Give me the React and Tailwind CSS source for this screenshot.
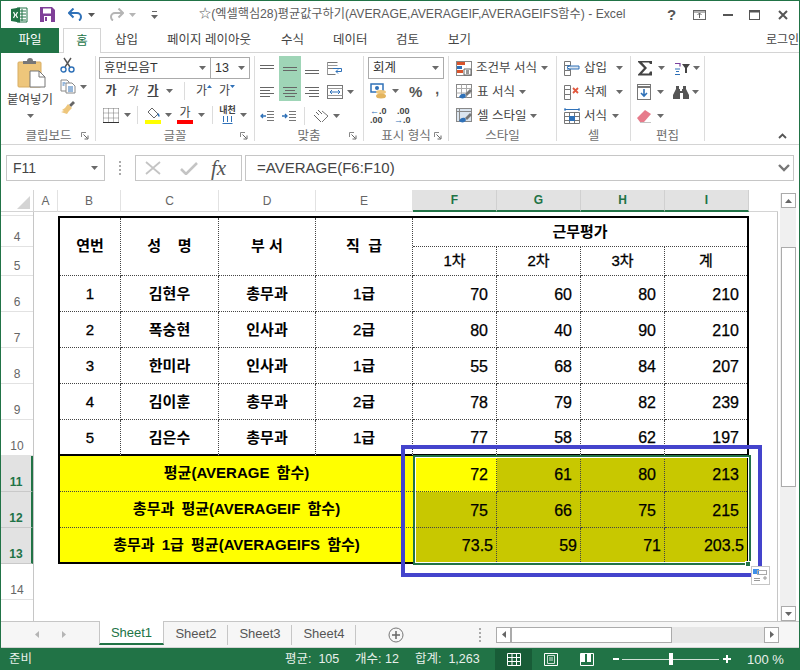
import React from "react";

const Caret = ({ c = "#6a6a6a", cls = "" }) => (
  <svg width="7" height="4" viewBox="0 0 7 4" className={"shrink-0 " + cls}><path d="M0 0h7L3.500 4z" fill={c} /></svg>
);

const Launcher = () => (
  <svg width="8" height="8" viewBox="0 0 8 8"><path d="M.5 5V.5H5" fill="none" stroke="#888" /><path d="M2.500 2.500l4 4M7 3.500V7H3.500" fill="none" stroke="#666" /></svg>
);

const Group = ({ w, label, children, launcher = true, last }) => (
  <div className={`${w} h-[85px] mt-[3px] flex flex-col shrink-0 ${last ? "" : "border-r border-[#dcdcdc]"}`}>
    <div className="flex-1 min-h-0 flex flex-col">{children}</div>
    <div className="h-[17px] grid grid-cols-[14px_1fr_14px] items-center text-[12.500px] leading-none text-[#707070] pt-[6px]">
      <span />
      <span className="text-center whitespace-nowrap">{label}</span>
      <span className="flex items-center">{launcher && <Launcher />}</span>
    </div>
  </div>
);

const Lines = ({ rows }) => (
  <svg width="14" height="12" viewBox="0 0 14 12">
    {rows.map((r, i) => <path key={i} d={`M${r[0]} ${r[1]}.5H${r[2]}`} stroke="#666" fill="none" />)}
  </svg>
);

const Paste = () => (
  <svg width="30" height="30" viewBox="0 0 30 30">
    <rect x="1" y="4" width="23" height="25" rx="1" fill="#eec67b" stroke="#d8ad62" />
    <path d="M6 6V3h4a3 3 0 0 1 6 0h3v3z" fill="#777" />
    <path d="M13 13h9l6 6v10H13z" fill="#fff" stroke="#777" />
    <path d="M22 13v6h6" fill="none" stroke="#777" />
  </svg>
);
const Cut = () => (
  <svg width="15" height="16" viewBox="0 0 15 16" fill="none">
    <path d="M4 1l6 9M11 1L5 10" stroke="#555" strokeWidth="1.400" />
    <circle cx="3.500" cy="12.500" r="2.500" stroke="#2f71b8" strokeWidth="1.400" />
    <circle cx="11.500" cy="12.500" r="2.500" stroke="#2f71b8" strokeWidth="1.400" />
  </svg>
);
const Copy = () => (
  <svg width="16" height="15" viewBox="0 0 16 15" fill="none">
    <path d="M1 1h6l2 2v9H1z" fill="#fff" stroke="#888" />
    <path d="M6 4h6l3 3v7H6z" fill="#fff" stroke="#888" />
    <path d="M2.500 4h3M2.500 6h2M8 8h5M8 10h5M8 12h5" stroke="#2f71b8" />
  </svg>
);
const Brush = () => (
  <svg width="16" height="15" viewBox="0 0 16 15">
    <path d="M9 5l4-4 2 2-4 4z" fill="#666" />
    <path d="M8 4l4 4-3 3-2 3-6-2 3-1-2-1 3-2z" fill="#eec67b" />
  </svg>
);
const Borders = () => (
  <svg width="16" height="15" viewBox="0 0 16 15" fill="none">
    <path d="M.5.5h15M.5 5h15M.5 10h15M.5.5v14M5.500.5v14M10.500.5v14M15.500.5v14" stroke="#777" strokeDasharray="1 1" />
    <path d="M0 14.500h16" stroke="#333" />
  </svg>
);
const Fill = () => (
  <svg width="16" height="17" viewBox="0 0 16 17">
    <path d="M7 1l6 6-4 4-6-6z" fill="#fff" stroke="#666" />
    <path d="M13 6c2 2 2 3 1 4-1-1-2-2-1-4z" fill="#2f71b8" />
    <rect y="13" width="16" height="4" fill="#ffff00" />
  </svg>
);
const FontColor = () => (
  <span className="flex flex-col items-center w-[16px] leading-none">
    <span className="text-[12px] h-[13px] text-[#444]">가</span>
    <span className="w-[16px] h-[4px] bg-[#ff0000]" />
  </span>
);
const Naecheon = () => (
  <span className="flex flex-col items-center leading-none w-[17px]">
    <span className="text-[9px] h-[10px] text-[#444] whitespace-nowrap font-bold">내천</span>
    <svg width="11" height="8" viewBox="0 0 11 8"><path d="M1.500 0v6M5.500 0v6M9.500 0v6M.5 7.500h10" stroke="#2f71b8" fill="none" /></svg>
  </span>
);
const Wrap = () => (
  <svg width="16" height="15" viewBox="0 0 16 15" fill="none">
    <path d="M.5 1.500h10M.5 7.500h8M.5 13.500h8" stroke="#777" />
    <path d="M.5 1v13M.5 4.500h10" stroke="#999" />
    <path d="M6 7.500h8.500v3H9M11 8.500l-2 2 2 2" stroke="#2f71b8" />
  </svg>
);
const Merge = () => (
  <svg width="16" height="14" viewBox="0 0 16 14" fill="none">
    <rect x=".5" y=".5" width="15" height="13" stroke="#777" />
    <path d="M.5 3.500h15M.5 10.500h15" stroke="#999" />
    <path d="M3 7h10M5 5L3 7l2 2M11 5l2 2-2 2" stroke="#2f71b8" />
  </svg>
);
const Indent = ({ flip }) => (
  <svg width="14" height="12" viewBox="0 0 14 12" fill="none">
    <path d="M7 1.500h7M7 4.500h7M7 7.500h7M7 10.500h7" stroke="#777" />
    {flip ? <path d="M0 6h5M3 4l2 2-2 2" stroke="#2f71b8" strokeWidth="1.300" /> : <path d="M1 6h5M3 4L1 6l2 2" stroke="#2f71b8" strokeWidth="1.300" />}
  </svg>
);
const Orient = () => (
  <svg width="17" height="15" viewBox="0 0 17 15" fill="none">
    <path d="M1 6l7 7M3 3l3 3M5 1l4 4" stroke="#666" />
    <path d="M9 2l6 5-6 6" stroke="#777" />
  </svg>
);
const Accounting = () => (
  <svg width="18" height="16" viewBox="0 0 18 16">
    <rect x="1" y="1" width="12" height="8" fill="#fff" stroke="#2f71b8" strokeWidth="1.500" />
    <circle cx="7" cy="5" r="2" fill="#2f71b8" />
    <ellipse cx="11" cy="9" rx="5" ry="2" fill="#eec67b" />
    <ellipse cx="11" cy="13" rx="5" ry="2.500" fill="#e3b45e" />
  </svg>
);
const Dec = ({ up }) => (
  <span className="w-[17px] h-[16px] text-[9px] leading-none text-[#444] flex flex-col font-bold">
    {up ? (
      <><span className="flex items-center"><span className="text-[#2f71b8] text-[9px]">←</span>.0</span><span>.00</span></>
    ) : (
      <><span className="pl-[3px]">.00</span><span className="flex items-center"><span className="text-[#2f71b8] text-[9px]">→</span>.0</span></>
    )}
  </span>
);
const Cond = () => (
  <svg width="16" height="15" viewBox="0 0 16 15" fill="none">
    <rect x=".5" y=".5" width="15" height="14" stroke="#888" fill="#fff" />
    <rect x="1" y="1" width="8" height="3" fill="#d8542d" />
    <rect x="1" y="5" width="5" height="3" fill="#2f71b8" />
    <rect x="1" y="9" width="6" height="3" fill="#d8542d" />
    <path d="M8 8h7v6H8z" fill="#fff" stroke="#666" />
    <path d="M10 10h3M10 12h3" stroke="#333" />
  </svg>
);
const TableFmt = ({ bright }) => (
  <svg width="17" height="16" viewBox="0 0 17 16" fill="none">
    <rect x=".5" y=".5" width="15" height="13" stroke="#888" fill={bright ? "#dbe5ef" : "#fff"} />
    {!bright && <path d="M.5 4.500h15M.5 9h15M5.500.5v13M10.500.5v13" stroke="#aaa" />}
    {bright && <path d="M.5 3.500h15M3.500.5v13" stroke="#888" />}
    <path d="M14 5l2 2-5 5-2-2z" fill="#777" />
    <path d="M3 13c1-3 4-4 6-3l1 2c-1 3-5 3-7 1z" fill="#2f71b8" />
  </svg>
);
const CellIns = () => (
  <svg width="16" height="15" viewBox="0 0 16 15" fill="none">
    <path d="M.5.5h6v4h-6zM.5 4.500h6v5h-6zM.5 9.500h6v5h-6zM6.500 9.500v5" stroke="#777" />
    <path d="M3 5h12v3H3M6 4.500L3 6.500l3 2" stroke="#2f71b8" fill="#dbe5ef" />
  </svg>
);
const CellDel = () => (
  <svg width="16" height="15" viewBox="0 0 16 15" fill="none">
    <path d="M.5.5h6v4h-6zM.5 4.500h6v5h-6zM.5 9.500h6v5h-6zM6.500 9.500v5" stroke="#777" />
    <path d="M9 3l5 5M14 3L9 8" stroke="#e2583e" strokeWidth="1.800" />
  </svg>
);
const CellFmt = () => (
  <svg width="16" height="16" viewBox="0 0 16 16" fill="none">
    <path d="M.5 1.500h15M1 0v3M15 0v3" stroke="#2f71b8" />
    <path d="M.5 4.500h15v11H.5zM5.500 4.500v11M10.500 4.500v11M.5 8.500h15M.5 12.500h15" stroke="#777" />
    <rect x="5" y="8" width="6" height="5" fill="#2f71b8" />
  </svg>
);
const Fillbox = () => (
  <svg width="14" height="16" viewBox="0 0 14 16" fill="none">
    <rect x=".5" y=".5" width="13" height="15" stroke="#777" fill="#fff" />
    <path d="M.5 3h13" stroke="#777" strokeWidth="2" />
    <path d="M7 5v7M4 9l3 3 3-3" stroke="#2f71b8" strokeWidth="1.600" />
  </svg>
);
const SortF = () => (
  <svg width="16" height="13" viewBox="0 0 16 13" fill="none">
    <path d="M1 1.500h5v3" stroke="#7b3f9d" strokeWidth="1.200" />
    <path d="M1 7h5M2 9.500h3M1 12.500h5" stroke="#2f71b8" />
    <path d="M8 2h8l-3 4v5h-2V6z" fill="#444" />
  </svg>
);
const Binoc = () => (
  <svg width="16" height="13" viewBox="0 0 16 13">
    <path d="M3 0h3v3h1v2h2V3h1V0h3v3l3 6v4h-6V7H7v6H0V9l3-6z" fill="#555" />
  </svg>
);
const Eraser = () => (
  <svg width="15" height="13" viewBox="0 0 15 13">
    <path d="M0 8L8 0l6 4-7 8H3z" fill="#e77b8b" />
    <path d="M3 13h11" stroke="#888" />
  </svg>
);

const Combo = ({ w, text, cls = "" }) => (
  <div className={`${w} h-[22px] flex items-center justify-between border border-[#ababab] bg-white px-[4px] text-[12.500px] text-[#333] ${cls}`}>
    <span className="whitespace-nowrap">{text}</span>
    <Caret />
  </div>
);

const Row = ({ children, cls = "" }) => <div className={`h-[24px] flex items-center shrink-0 ${cls}`}>{children}</div>;
const VSep = ({ cls = "" }) => <span className={`w-px h-[18px] bg-[#dcdcdc] shrink-0 ${cls}`} />;

const Fx = ({ italic, bold, under, up, down }) => (
  <span className={`flex items-end justify-center w-[16px] text-[12px] leading-none text-[#444] ${bold ? "font-bold" : ""} ${italic ? "italic" : ""} ${under ? "underline" : ""}`}>
    가
    {up && <svg className="mb-[9px]" width="5" height="3" viewBox="0 0 5 3"><path d="M0 3l2.500-3L5 3z" fill="#2f71b8" /></svg>}
    {down && <svg className="mb-[9px]" width="5" height="3" viewBox="0 0 5 3"><path d="M0 0h5L2.500 3z" fill="#2f71b8" /></svg>}
  </span>
);

const Ribbon = () => (
  <div className="h-[92px] flex border-b border-[#d4d4d4] pl-[1px] bg-white text-[#444] shrink-0">
    <Group w="w-[94px]" label="클립보드">
      <div className="flex h-full">
        <div className="w-[56px] flex flex-col items-center pt-[2px] pl-[4px]">
          <Paste />
          <span className="text-[12.500px] leading-none mt-[6px] whitespace-nowrap pr-[4px]">붙여넣기</span>
          <Caret cls="mt-[7px] mr-[4px]" />
        </div>
        <div className="flex flex-col pl-[2px] pt-[1px] gap-[6px]">
          <Cut />
          <span className="flex items-center gap-[4px]"><Copy /><Caret /></span>
          <Brush />
        </div>
      </div>
    </Group>
    <Group w="w-[159px]" label="글꼴">
      <div className="flex pl-[3px] h-[24px] items-start pt-[1px]">
        <Combo w="w-[112px]" text="휴먼모음T" />
        <Combo w="w-[39px]" text="13" cls="border-l-0" />
      </div>
      <Row cls="pl-[7px] gap-[5px]">
        <Fx bold /><Fx italic /><Fx bold under /><Caret /><VSep cls="ml-[6px]" />
        <span className="ml-[6px]"><Fx up /></span><span className="ml-[2px]"><Fx down /></span>
      </Row>
      <Row cls="pl-[7px]">
        <Borders /><Caret cls="ml-[5px]" /><VSep cls="ml-[6px]" />
        <span className="ml-[7px]"><Fill /></span><Caret cls="ml-[4px]" />
        <span className="ml-[5px]"><FontColor /></span><Caret cls="ml-[5px]" /><VSep cls="ml-[7px]" />
        <span className="ml-[6px]"><Naecheon /></span><Caret cls="ml-[4px]" />
      </Row>
    </Group>
    <Group w="w-[109px]" label="맞춤">
      <div className="flex h-[48px] pl-[5px]">
        <div className="w-[19px] flex flex-col items-start">
          <Row><Lines rows={[[0, 3, 14], [0, 6, 14]]} /></Row>
          <Row><Lines rows={[[0, 1, 14], [0, 4, 10], [0, 7, 14], [0, 10, 10]]} /></Row>
        </div>
        <div className="w-[22px] h-[45px] bg-[#9fd5b7] flex flex-col items-center">
          <Row><Lines rows={[[0, 5, 14], [0, 8, 14]]} /></Row>
          <Row><Lines rows={[[0, 1, 14], [2, 4, 12], [0, 7, 14], [2, 10, 12]]} /></Row>
        </div>
        <div className="w-[21px] flex flex-col items-center">
          <Row><Lines rows={[[0, 8, 14], [0, 11, 14]]} /></Row>
          <Row><Lines rows={[[0, 1, 14], [4, 4, 14], [0, 7, 14], [4, 10, 14]]} /></Row>
        </div>
        <div className="w-[38px] flex flex-col pl-[5px]">
          <Row><Wrap /></Row>
          <Row cls="gap-[4px]"><Merge /><Caret /></Row>
        </div>
      </div>
      <Row cls="pl-[5px] gap-[8px]">
        <Indent /><Indent flip /><VSep /><span className="flex items-center gap-[3px]"><Orient /><Caret /></span>
      </Row>
    </Group>
    <Group w="w-[85px]" label="표시 형식">
      <div className="pl-[4px] h-[24px] pt-[1px]"><Combo w="w-[76px]" text="회계" /></div>
      <Row cls="pl-[6px]">
        <Accounting /><Caret cls="ml-[4px]" />
        <span className="ml-[10px] text-[15px] leading-none text-[#555] font-bold">%</span>
        <span className="ml-[13px] text-[14px] leading-none text-[#555] font-bold pb-[4px]">,</span>
      </Row>
      <Row cls="pl-[6px] gap-[7px]"><Dec up /><Dec /></Row>
    </Group>
    <Group w="w-[108px]" label="스타일" launcher={false}>
      {[[<Cond key="a" />, "조건부 서식"], [<TableFmt key="b" />, "표 서식"], [<TableFmt key="c" bright />, "셀 스타일"]].map(([ic, t]) => (
        <Row key={t} cls="pl-[7px] gap-[4px] text-[12.500px]">{ic}<span className="whitespace-nowrap">{t}</span><Caret /></Row>
      ))}
    </Group>
    <Group w="w-[74px]" label="셀" launcher={false}>
      <Row cls="pl-[7px] gap-[4px] text-[12.500px]"><CellIns /><span className="w-[24px] whitespace-nowrap">삽입</span><Caret cls="ml-[4px]" /></Row>
      <Row cls="pl-[7px] gap-[4px] text-[12.500px]"><CellDel /><span className="w-[24px] whitespace-nowrap">삭제</span><Caret cls="ml-[4px]" /></Row>
      <Row cls="pl-[7px] gap-[4px] text-[12.500px]"><CellFmt /><span className="w-[24px] whitespace-nowrap">서식</span><Caret /></Row>
    </Group>
    <Group w="w-[74px]" label="편집" launcher={false}>
      <Row cls="pl-[6px]">
        <svg width="16" height="16" viewBox="0 0 16 16"><path d="M1 1h14v3h-2l-1-1.500H5l5 5.500-5 5.500h7l1-2h2v4H1v-1l6-6.500L1 2z" fill="#444" /></svg>
        <Caret cls="ml-[5px]" /><span className="ml-[9px] flex"><SortF /></span><Caret cls="ml-[3px]" />
      </Row>
      <Row cls="pl-[6px]">
        <Fillbox /><Caret cls="ml-[6px]" /><span className="ml-[9px] flex"><Binoc /></span><Caret cls="ml-[3px]" />
      </Row>
      <Row cls="pl-[6px] gap-[5px]"><Eraser /><Caret /></Row>
    </Group>
    <div className="flex-1 flex items-end justify-end pr-[12px] pb-[5px]">
      <svg width="9" height="6" viewBox="0 0 9 6" fill="none"><path d="M1 5l3.500-3.500L8 5" stroke="#555" strokeWidth="1.800" /></svg>
    </div>
  </div>
);

const TitleBar = () => (
  <div className="h-[27px] flex items-center shrink-0 bg-white">
    <div className="flex items-center w-[197px] shrink-0">
      <span className="ml-[10px]">
        <svg width="17" height="16" viewBox="0 0 17 16"><path d="M6 1h10v14H6z" fill="#fff" stroke="#217346" /><path d="M7 4h8M7 7h8M7 10h8M7 13h8M11 2v12" stroke="#217346" /><path d="M0 2l9-1.500v15L0 14z" fill="#217346" /><path d="M2.500 5l1.500 3-1.500 3M6.500 5L5 8l1.500 3" stroke="#fff" fill="none" strokeWidth="1.200" /></svg>
      </span>
      <span className="ml-[12px]">
        <svg width="15" height="15" viewBox="0 0 15 15"><path d="M0 0h12l3 3v12H0z" fill="#7f3f98" /><rect x="3" y="1.500" width="8" height="5" fill="#fff" /><rect x="4" y="9" width="7" height="6" fill="#fff" /><rect x="5" y="10" width="2" height="4" fill="#7f3f98" /></svg>
      </span>
      <span className="ml-[13px]">
        <svg width="15" height="13" viewBox="0 0 15 13" fill="none"><path d="M2 5h7a4 4 0 0 1 4 4c0 2-1 3-2 3.500" stroke="#2f71b8" strokeWidth="2" /><path d="M5.500 0.500L1 5l4.500 4.500" stroke="#2f71b8" strokeWidth="2" /></svg>
      </span>
      <Caret cls="ml-[5px]" c="#555" />
      <span className="ml-[14px]">
        <svg width="15" height="13" viewBox="0 0 15 13" fill="none"><path d="M13 5H6a4 4 0 0 0-4 4c0 2 1 3 2 3.500" stroke="#b5b5b5" strokeWidth="2" /><path d="M9.500 0.500L14 5 9.500 9.500" stroke="#b5b5b5" strokeWidth="2" /></svg>
      </span>
      <Caret cls="ml-[5px]" c="#b5b5b5" />
      <span className="ml-[15px]">
        <svg width="7" height="8" viewBox="0 0 7 8"><path d="M1 .5h5" stroke="#666" fill="none" /><path d="M0 4h7L3.500 8z" fill="#666" /></svg>
      </span>
    </div>
    <div className="w-[465px] shrink-0 text-[12.200px] text-[#5b5b5b] whitespace-nowrap pl-[1px]">☆(엑셀핵심28)평균값구하기(AVERAGE,AVERAGEIF,AVERAGEIFS함수) - Excel</div>
    <div className="flex items-center flex-1">
      <span className="w-[17px] text-[15px] font-bold text-[#555] text-center leading-none">?</span>
      <span className="ml-[13px]"><svg width="13" height="10" viewBox="0 0 13 10" fill="none"><rect x=".5" y=".5" width="12" height="9" stroke="#666" /><path d="M6.500 8V3M4.500 5l2-2 2 2M1 2h11" stroke="#666" /></svg></span>
      <span className="ml-[17px]"><svg width="10" height="2" viewBox="0 0 10 2"><rect width="10" height="2" fill="#555" /></svg></span>
      <span className="ml-[16px]"><svg width="11" height="10" viewBox="0 0 11 10" fill="none"><rect x=".5" y=".5" width="10" height="9" stroke="#555" /><path d="M0 1.500h11" stroke="#555" strokeWidth="2" /></svg></span>
      <span className="ml-[18px]"><svg width="10" height="10" viewBox="0 0 10 10" fill="none"><path d="M1 1l8 8M9 1L1 9" stroke="#555" strokeWidth="2" /></svg></span>
    </div>
  </div>
);

const tabs = [["삽입", "w-[52px]"], ["페이지 레이아웃", "w-[114px]"], ["수식", "w-[52px]"], ["데이터", "w-[63px]"], ["검토", "w-[52px]"], ["보기", "w-[52px]"]];

const TabBar = () => (
  <div className="h-[25px] flex items-stretch shrink-0 text-[12.500px] leading-none border-b border-[#d4d4d4] bg-white text-[#444]">
    <div className="w-[58px] bg-[#217346] text-white flex items-center justify-center -mb-px">파일</div>
    <div className="ml-[4px] w-[38px] -mb-px bg-white border border-b-0 border-[#d4d4d4] text-[#217346] flex items-center justify-center">홈</div>
    <div className="pl-[14px] flex items-center">
      {tabs.map(([t, w]) => <span key={t} className={`${w} whitespace-nowrap`}>{t}</span>)}
    </div>
    <div className="flex-1 flex items-center justify-end whitespace-nowrap text-[#444] text-[12px]">로그인</div>
  </div>
);

const Dots = () => (
  <>
    <span className="w-[2px] h-[2px] bg-[#aaa]" /><span className="w-[2px] h-[2px] bg-[#aaa]" /><span className="w-[2px] h-[2px] bg-[#aaa]" /><span className="w-[2px] h-[2px] bg-[#aaa]" />
  </>
);

const FormulaBar = () => (
  <div className="h-[45px] shrink-0 bg-white flex items-start pt-[10px]">
    <div className="ml-[5px] w-[99px] h-[26px] border border-[#c6c6c6] flex items-center justify-between px-[6px] text-[14px] text-[#444]">
      <span>F11</span><Caret />
    </div>
    <div className="w-[30px] h-[26px] flex flex-col items-center justify-center gap-[2px]"><Dots /></div>
    <div className="w-[107px] h-[26px] border border-[#c6c6c6] flex items-center">
      <svg className="ml-[9px]" width="16" height="14" viewBox="0 0 16 14" fill="none"><path d="M1 1l14 12M15 1L1 13" stroke="#c4c4c4" strokeWidth="1.800" /></svg>
      <svg className="ml-[19px]" width="18" height="14" viewBox="0 0 18 14" fill="none"><path d="M1 8l5 5L17 2" stroke="#c4c4c4" strokeWidth="2.600" /></svg>
      <span className="ml-[13px] text-[21px] leading-none italic text-[#555] [font-family:'Liberation_Serif',serif]">fx</span>
    </div>
    <div className="ml-[3px] mr-[5px] flex-1 h-[26px] border border-[#c6c6c6] flex items-center justify-between pl-[11px] pr-[3px] text-[15px] text-[#444]">
      <span>=AVERAGE(F6:F10)</span>
      <svg width="12" height="8" viewBox="0 0 12 8" fill="none"><path d="M1 1l5 5 5-5" stroke="#777" strokeWidth="2.400" /></svg>
    </div>
  </div>
);

const colHeads = [["A", "w-[24px]"], ["B", "w-[63px]"], ["C", "w-[98px]"], ["D", "w-[97px]"], ["E", "w-[97px]"], ["F", "w-[84px]", 1], ["G", "w-[84px]", 1], ["H", "w-[84px]", 1], ["I", "w-[84px]", 1]];

const ColHeader = () => (
  <div className="h-[22px] flex shrink-0 bg-white text-[12px] text-[#666] leading-none">
    <div className="w-[33px] shrink-0 border-r border-b border-[#d4d4d4] flex items-end justify-end pr-[3px] pb-[2px]">
      <svg width="13" height="13" viewBox="0 0 13 13"><path d="M13 0v13H0z" fill="#d4d4d4" /></svg>
    </div>
    {colHeads.map(([c, w, sel]) => (
      <div key={c} className={`${w} shrink-0 flex items-center justify-center border-r border-[#e2e2e2] ${sel ? "bg-[#e2e2e2] border-r-[#d0d0d0] text-[#217346] font-bold border-b-2 border-b-[#217346]" : "border-b border-b-[#d4d4d4]"}`}>{c}</div>
    ))}
    <div className="flex-1 border-b border-[#d4d4d4]" />
  </div>
);

const rowHeads = [["", "h-[4px]"], ["4", "h-[31px]"], ["5", "h-[29px]"], ["6", "h-[36px]"], ["7", "h-[36px]"], ["8", "h-[36px]"], ["9", "h-[36px]"], ["10", "h-[36px]"], ["11", "h-[36px]", 1], ["12", "h-[36px]", 1], ["13", "h-[36px]", 1], ["14", "h-[36px]"], ["15", "h-[36px]"]];

const RowHeader = () => (
  <div className="w-[33px] shrink-0 border-r border-[#c6c6c6] overflow-hidden text-[12px] leading-none text-[#666] bg-white">
    {rowHeads.map(([r, h, sel]) => (
      <div key={r + h} className={`${h} flex items-end justify-center pb-[3px] border-b ${sel ? "bg-[#e2e2e2] text-[#217346] font-bold border-[#c9c9c9] border-r-2 border-r-[#217346]" : "border-[#e2e2e2]"}`}>{r}</div>
    ))}
  </div>
);

const HeadCell = ({ span = "", children, cls = "", noR, noB, thick }) => (
  <div className={`${span} flex items-center justify-center text-[15px] font-bold text-black whitespace-pre ${noR ? "" : "border-r border-dotted border-r-[#444]"} ${thick ? "border-b-2 border-solid border-b-black [border-right-style:dotted]" : noB ? "" : "border-b border-dotted border-b-[#444]"} ${cls}`}>{children}</div>
);
const Num = ({ children, cls = "", pr = "pr-[8px]", noR, noB, thick }) => (
  <div className={`flex items-center justify-end ${pr} pt-[2px] text-[16px] text-black [-webkit-text-stroke:0.25px_black] ${noR ? "" : "border-r border-dotted border-r-[#444]"} ${thick ? "border-b-2 border-solid border-b-black [border-right-style:dotted]" : noB ? "" : "border-b border-dotted border-b-[#444]"} ${cls}`}>{children}</div>
);
const Reg = ({ children }) => <span className="font-normal [-webkit-text-stroke:0.3px_black]">{children}</span>;

const people = [
  ["1", "김현우", "총무과", "1", 70, 60, 80, 210],
  ["2", "폭숭현", "인사과", "2", 80, 40, 90, 210],
  ["3", "한미라", "인사과", "1", 55, 68, 84, 207],
  ["4", "김이훈", "총무과", "2", 78, 79, 82, 239],
  ["5", "김은수", "총무과", "1", 77, 58, 62, 197],
];
const summary = [
  ["평균(AVERAGE 함수)", [72, 61, 80, 213]],
  ["총무과 평균(AVERAGEIF 함수)", [75, 66, 75, 215]],
  ["총무과 1급 평균(AVERAGEIFS 함수)", ["73.5", 59, 71, "203.5"]],
];

const Table = () => (
  <div className="w-[691px] border-2 border-black grid grid-cols-[61px_98px_97px_97px_84px_84px_84px_82px] grid-rows-[29px_29px_repeat(7,36px)_34px]">
    <HeadCell span="row-span-2">연번</HeadCell>
    <HeadCell span="row-span-2">{"성    명"}</HeadCell>
    <HeadCell span="row-span-2">{"부 서"}</HeadCell>
    <HeadCell span="row-span-2">{"직  급"}</HeadCell>
    <HeadCell span="col-span-4" noR>근무평가</HeadCell>
    <HeadCell><Reg>1차</Reg></HeadCell>
    <HeadCell><Reg>2차</Reg></HeadCell>
    <HeadCell><Reg>3차</Reg></HeadCell>
    <HeadCell noR><Reg>계</Reg></HeadCell>
    {people.map((p, i) => (
      <React.Fragment key={p[0]}>
        <HeadCell cls="pt-[2px]" thick={i === 4}><Reg>{p[0]}</Reg></HeadCell>
        <HeadCell cls="pt-[2px]" thick={i === 4}>{p[1]}</HeadCell>
        <HeadCell cls="pt-[2px]" thick={i === 4}>{p[2]}</HeadCell>
        <HeadCell cls="pt-[2px]" thick={i === 4}><Reg>{p[3]}</Reg>급</HeadCell>
        {p.slice(4).map((n, j) => (
          <Num key={j} noR={j === 3} thick={i === 4}>{n}</Num>
        ))}
      </React.Fragment>
    ))}
    {summary.map(([t, v], r) => (
      <React.Fragment key={t}>
        <HeadCell span="col-span-4" noR noB={r === 2} cls="bg-[#ffff00] [word-spacing:3px]">{t}</HeadCell>
        {v.map((n, j) => (
          <Num key={j} pr={r === 2 ? "pr-[3px]" : "pr-[8px]"} noR={j === 3} noB={r === 2} cls={r === 0 && j === 0 ? "bg-[#ffff00]" : "bg-[#c8c800]"}>{n}</Num>
        ))}
      </React.Fragment>
    ))}
  </div>
);

const Sheet = () => (
  <div className="relative flex-1 overflow-hidden bg-white pl-[24px] pt-[4px] border-r border-[#c6c6c6]">
    <Table />
    <div className="absolute left-[379px] top-[243px] w-[338px] h-[110px] border-2 border-[#217346] pointer-events-none">
      <div className="w-full h-full border border-white" />
    </div>
    <div className="absolute left-[367px] top-[233px] w-[361px] h-[132px] border-[4px] border-[#4444cc] pointer-events-none" />
    <div className="absolute left-[711px] top-[349px] w-[6px] h-[6px] bg-[#217346] border border-white" />
    <div className="absolute left-[717px] top-[354px] w-[19px] h-[19px] border border-[#c6c6c6] bg-white flex items-center justify-center">
      <svg width="15" height="13" viewBox="0 0 15 13" fill="none"><rect x="0" y="0" width="6" height="5" fill="#3f8fe8" /><rect x="4.500" y="1.500" width="9" height="4" stroke="#aaa" /><path d="M1 9.500h6M1 11.500h6M10 9h4M12 7v4" stroke="#999" /></svg>
    </div>
  </div>
);

const VScroll = () => (
  <div className="w-[21px] shrink-0 bg-white flex flex-col pl-[2px] pr-[3px] pt-[3px]">
    <div className="flex-1 flex flex-col bg-[#f0f0f0]">
      <div className="w-[15px] h-[15px] bg-white border border-[#ababab] flex items-center justify-center shrink-0 self-center">
        <svg width="7" height="4" viewBox="0 0 7 4"><path d="M0 4h7L3.500 0z" fill="#666" /></svg>
      </div>
      <div className="w-[15px] h-[240px] bg-white border border-[#ababab] mt-[39px] shrink-0 self-center" />
      <div className="flex-1" />
      <div className="w-[15px] h-[15px] bg-white border border-[#ababab] flex items-center justify-center shrink-0 self-center">
        <Caret c="#666" />
      </div>
    </div>
  </div>
);

const SheetBar = () => (
  <div className="h-[27px] shrink-0 bg-[#f6f6f6] flex items-stretch text-[13px] leading-none text-[#555] border-b border-[#d4d4d4]">
    <div className="w-[98px] border-t border-[#c6c6c6] flex items-center justify-center gap-[23px]">
      <svg width="4" height="7" viewBox="0 0 4 7"><path d="M4 0v7L0 3.500z" fill="#b5b5b5" /></svg>
      <svg width="4" height="7" viewBox="0 0 4 7"><path d="M0 0v7l4-3.500z" fill="#b5b5b5" /></svg>
    </div>
    <div className="w-[65px] bg-white border-x border-[#c6c6c6] border-b-2 border-b-[#217346] text-[#217346] flex items-center justify-center mb-[2px]">Sheet1</div>
    <div className="w-[331px] border-t border-[#c6c6c6] flex items-stretch">
      {["Sheet2", "Sheet3", "Sheet4"].map((s) => (
        <div key={s} className="w-[64px] flex items-center justify-center pb-[3px] relative">
          <span>{s}</span>
          <span className="absolute right-0 top-[3px] h-[20px] w-px bg-[#c6c6c6]" />
        </div>
      ))}
      <div className="ml-[32px] flex items-center">
        <svg width="16" height="16" viewBox="0 0 16 16" fill="none"><circle cx="8" cy="8" r="7" stroke="#777" /><path d="M8 4v8M4 8h8" stroke="#666" strokeWidth="1.500" /></svg>
      </div>
      <div className="ml-auto mr-[13px] w-[4px] flex flex-col items-center justify-center gap-[2px]"><Dots /></div>
    </div>
    <div className="flex-1 border-t border-[#c6c6c6] flex items-center pr-[20px]">
      <div className="flex-1 flex items-center h-[16px] bg-[#e6e6e6] ml-[1px]">
        <div className="w-[15px] h-[16px] bg-white border border-[#ababab] flex items-center justify-center shrink-0"><svg width="4" height="7" viewBox="0 0 4 7"><path d="M4 0v7L0 3.500z" fill="#666" /></svg></div>
        <div className="w-[161px] h-[16px] bg-white border border-[#ababab] shrink-0" />
        <div className="flex-1" />
        <div className="w-[15px] h-[16px] bg-white border border-[#ababab] flex items-center justify-center shrink-0"><svg width="4" height="7" viewBox="0 0 4 7"><path d="M0 0v7l4-3.500z" fill="#666" /></svg></div>
      </div>
    </div>
  </div>
);

const StatusBar = () => (
  <div className="h-[22px] shrink-0 bg-[#217346] text-[#e8f0ea] flex items-center text-[12.500px] leading-none whitespace-nowrap">
    <span className="ml-[8px] w-[276px]">준비</span>
    <span className="w-[70px]">평균:&nbsp; 105</span>
    <span className="w-[60px]">개수: 12</span>
    <span className="w-[80px]">합계:&nbsp; 1,263</span>
    <div className="w-[37px] h-[21px] bg-[#185c37] flex items-center justify-center">
      <svg width="14" height="13" viewBox="0 0 14 13" fill="none"><path d="M.5.5h13v12H.5zM.5 4.500h13M.5 8.500h13M5 .5v12M9.500.5v12" stroke="#fff" /></svg>
    </div>
    <span className="ml-[12px]"><svg width="14" height="13" viewBox="0 0 14 13" fill="none"><path d="M.5.5h13v12H.5z" stroke="#fff" /><path d="M3.500 2.500h7v8h-7zM5 5h4M5 7h4" stroke="#d0e0d6" /></svg></span>
    <span className="ml-[22px]"><svg width="14" height="13" viewBox="0 0 14 13" fill="none"><path d="M.5.5h13v12H.5z" stroke="#fff" /><path d="M1 1h4v8H1zM7 1h4v8H7z" fill="#fff" /></svg></span>
    <span className="ml-[19px]"><svg width="6" height="2" viewBox="0 0 6 2"><rect width="6" height="2" fill="#fff" /></svg></span>
    <div className="ml-[3px] w-[97px] h-[12px] flex items-center relative">
      <div className="w-full h-px bg-[#d0e0d6]" />
      <div className="absolute left-[47px] top-0 w-[4px] h-[12px] bg-white" />
    </div>
    <span className="ml-[4px]"><svg width="8" height="8" viewBox="0 0 8 8"><path d="M3 0h2v3h3v2H5v3H3V5H0V3h3z" fill="#fff" /></svg></span>
    <span className="ml-[16px] text-[13px]">100 %</span>
  </div>
);

export default function App() {
  return (
    <div className="w-[800px] h-[670px] overflow-hidden flex flex-col border-x border-t border-[#217346] bg-white [font-family:'Liberation_Sans','Noto_Sans_CJK_KR',sans-serif]">
      <TitleBar />
      <TabBar />
      <Ribbon />
      <FormulaBar />
      <div className="flex-1 min-h-0 flex">
        <div className="flex-1 min-w-0 flex flex-col">
          <ColHeader />
          <div className="flex-1 min-h-0 flex">
            <RowHeader />
            <Sheet />
          </div>
        </div>
        <VScroll />
      </div>
      <SheetBar />
      <StatusBar />
    </div>
  );
}
